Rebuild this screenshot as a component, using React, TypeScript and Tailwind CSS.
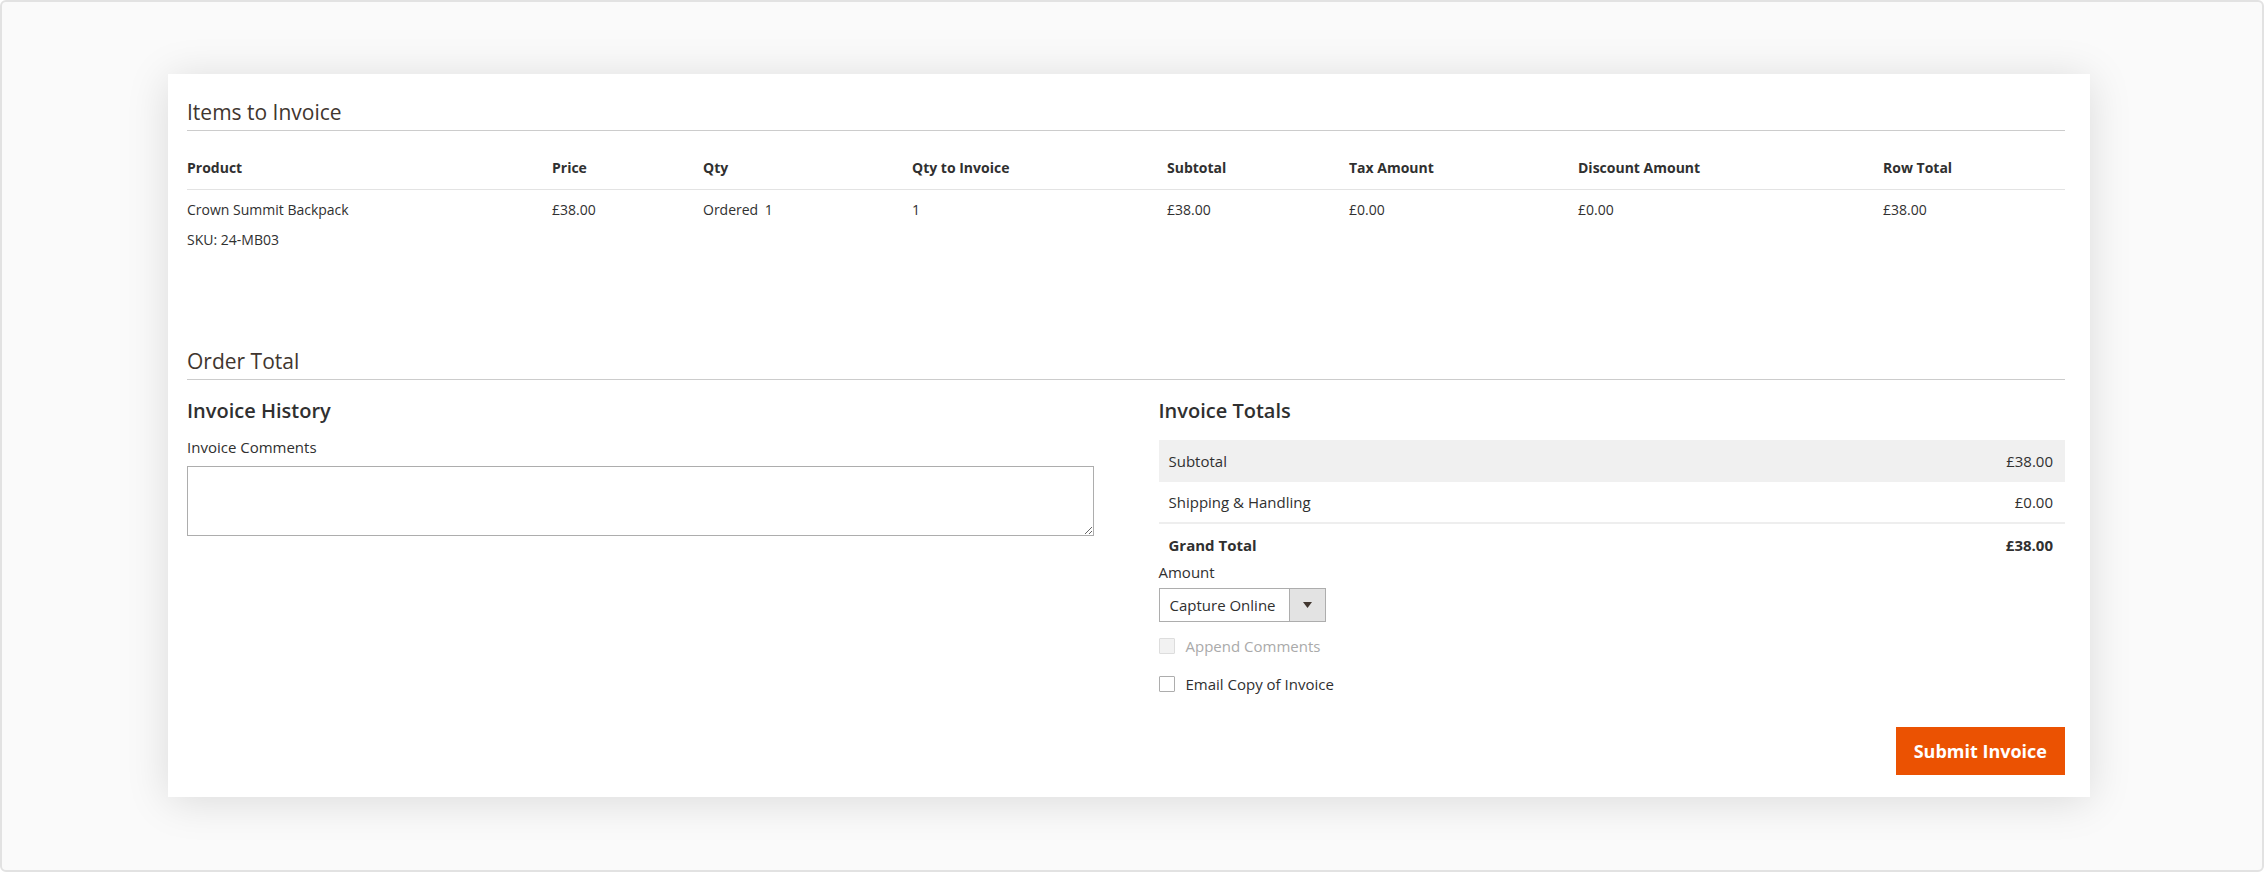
const columns = [
  "Product",
  "Price",
  "Qty",
  "Qty to Invoice",
  "Subtotal",
  "Tax Amount",
  "Discount Amount",
  "Row Total",
];

const gridCols = "grid grid-cols-[365px_151px_209px_255px_182px_229px_305px_1fr]";

const SectionTitle = ({ children }: { children: React.ReactNode }) => (
  <div className="border-b border-[#cccccc] pb-[6px]">
    <h2 className="text-[21px] leading-[24px] font-normal text-[#41362f]">{children}</h2>
  </div>
);

const App = () => {
  return (
    <div
      className="h-[872px] w-[2264px] overflow-hidden rounded-[6px] border-2 border-[#e2e2e2] bg-[#fafafa] pt-[72px] pl-[166px]"
      style={{ fontFamily: '"Open Sans", "Noto Sans", sans-serif' }}
    >
      <div className="w-[1922px] bg-white pt-[26px] pl-[19px] pr-[25px] pb-[22px] text-[#303030] shadow-[0_4px_40px_rgba(0,0,0,0.13)]">
        {/* Items to Invoice */}
        <SectionTitle>Items to Invoice</SectionTitle>

        <div className="mt-[27px]">
          <div className={`${gridCols} border-b border-[#e3e3e3] pb-[11px] text-[14px] leading-[20px] font-bold`}>
            {columns.map((c) => (
              <div key={c}>{c}</div>
            ))}
          </div>
          <div className={`${gridCols} pt-[10px] text-[14px] leading-[20px]`}>
            <div>
              <div>Crown Summit Backpack</div>
              <div className="mt-[10px]">SKU: 24-MB03</div>
            </div>
            <div>£38.00</div>
            <div>
              Ordered <span className="ml-[3px]">1</span>
            </div>
            <div>1</div>
            <div>£38.00</div>
            <div>£0.00</div>
            <div>£0.00</div>
            <div>£38.00</div>
          </div>
        </div>

        {/* Order Total */}
        <div className="mt-[99px]">
          <SectionTitle>Order Total</SectionTitle>
        </div>

        <div className="mt-[19px] grid grid-cols-2 gap-[65px]">
          {/* Invoice History */}
          <div>
            <h3 className="text-[20px] leading-[24px] font-semibold">Invoice History</h3>
            <label className="mt-[14px] block text-[15px] leading-[20px]">Invoice Comments</label>
            <textarea className="mt-[9px] block h-[70px] w-full resize-y border border-[#adadad] bg-white p-[8px] text-[14px] outline-none" />
          </div>

          {/* Invoice Totals */}
          <div>
            <h3 className="text-[20px] leading-[24px] font-semibold">Invoice Totals</h3>
            <div className="mt-[17px] text-[15px] leading-[20px]">
              <div className="flex h-[42px] items-center justify-between bg-[#f0f0f0] pl-[10px] pr-[12px]">
                <span>Subtotal</span>
                <span>£38.00</span>
              </div>
              <div className="flex h-[42px] items-center justify-between border-b-2 border-[#eeeeee] pl-[10px] pr-[12px]">
                <span>Shipping &amp; Handling</span>
                <span>£0.00</span>
              </div>
              <div className="flex justify-between pt-[11px] pl-[10px] pr-[12px] font-bold">
                <span>Grand Total</span>
                <span>£38.00</span>
              </div>
            </div>

            <div className="mt-[7px] text-[15px] leading-[20px]">Amount</div>
            <div className="mt-[6px] flex h-[34px] w-[167px] border border-[#adadad] text-[15px]">
              <div className="flex flex-1 items-center pl-[10px]">Capture Online</div>
              <div className="flex w-[36px] items-center justify-center border-l border-[#adadad] bg-[#e3e3e3]">
                <svg width="9" height="6" viewBox="0 0 9 6">
                  <path d="M0 0h9L4.5 6z" fill="#41362f" />
                </svg>
              </div>
            </div>

            <div className="mt-[16px] flex items-center gap-[11px] text-[15px] leading-[16px]">
              <span className="h-[16px] w-[16px] rounded-[1px] border border-[#dddddd] bg-[#f2f2f2]" />
              <span className="text-[#aaaaaa]">Append Comments</span>
            </div>
            <div className="mt-[22px] flex items-center gap-[11px] text-[15px] leading-[16px]">
              <span className="h-[16px] w-[16px] rounded-[1px] border border-[#adadad] bg-white" />
              <span>Email Copy of Invoice</span>
            </div>

            <div className="mt-[35px] flex justify-end">
              <button className="h-[48px] bg-[#eb5202] px-[18px] text-[18px] font-bold text-white">
                Submit Invoice
              </button>
            </div>
          </div>
        </div>
      </div>
    </div>
  );
};

export default App;
